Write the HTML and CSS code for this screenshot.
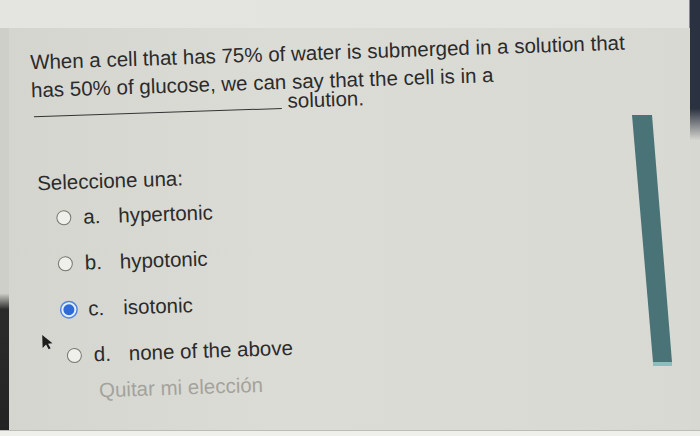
FILE: index.html
```html
<!DOCTYPE html>
<html>
<head>
<meta charset="utf-8">
<link rel="stylesheet" href="styles.css">
</head>
<body>
<div class="screen">
  <div class="topband"></div>
  <div class="panel">
    <div class="leftedge"></div>
    <div class="content">
      <div class="question">
        <p class="qline">When a cell that has 75% of water is submerged in a solution that</p>
        <p class="qline">has 50% of glucose, we can say that the cell is in a</p>
        <div class="blankline"><span class="blank"></span><span class="after">solution.</span></div>
      </div>
      <div class="prompt">Seleccione una:</div>
      <div class="options">
        <div class="opt opt-a"><span class="radio"></span><span class="letter">a.</span><span>hypertonic</span></div>
        <div class="opt opt-b"><span class="radio"></span><span class="letter">b.</span><span>hypotonic</span></div>
        <div class="opt opt-c"><span class="radio checked"></span><span class="letter">c.</span><span>isotonic</span></div>
        <div class="opt opt-d"><span class="cursor"><svg width="12" height="16" viewBox="0 0 12 16"><path d="M1 1 L1 14 L4.5 10.5 L7 15.5 L9 14.5 L6.5 9.8 L11 9.6 Z" fill="#1e1e1e"/></svg></span><span class="radio"></span><span class="letter">d.</span><span>none of the above</span></div>
      </div>
      <div class="clear">Quitar mi elección</div>
    </div>
    <div class="side">
      <svg width="64" height="256" viewBox="0 0 64 256"><polygon points="20,0 40,0 60,247 41,247" fill="#4a7377"/><polygon points="41,247 60,247 60,251 41,251" fill="#8fbcbc"/></svg>
    </div>
    <div class="rightedge"></div>
  </div>
  <div class="bottomband"></div>
</div>
</body>
</html>
```
FILE: styles.css
```css
html, body { margin: 0; padding: 0; }
body { width: 700px; height: 436px; overflow: hidden; background: #d7d7d1; font-family: "Liberation Sans", Arial, sans-serif; color: #2b2b2b; }
.screen { width: 700px; height: 436px; display: flex; flex-direction: column; background: #d8d8d2; }
.topband { height: 28px; background: linear-gradient(90deg, #e4e4e1 0%, #e2e2df 98.4%, #2a3140 98.6%); flex: none; }
.panel { flex: 1; display: flex; background: linear-gradient(90deg, #d5d5cf, #dcdcd6 40%, #d9d9d3); }
.leftedge { width: 9px; flex: none; background: linear-gradient(#cfcfc9 0%, #cfcfc9 66%, #2b2b2b 70%, #232323 100%); }
.content { flex: 1; min-width: 0; padding: 21px 0 0 20px; transform: rotate(-1.9deg); transform-origin: 0 0; font-size: 20.5px; }
.question { line-height: 28px; }
.qline { margin: 0; white-space: nowrap; }
.blankline { display: flex; align-items: flex-start; gap: 6px; margin-top: -9px; }
.blank { width: 248px; height: 22px; border-bottom: 1.5px solid #333; box-sizing: border-box; margin-left: 2px; }
.after { line-height: 28px; }
.prompt { line-height: 28px; margin: 46px 0 0 3px; }
.options { margin-top: -2px; }
.opt { display: flex; align-items: center; height: 46px; white-space: nowrap; }
.opt-a { padding-left: 21px; }
.opt-b { padding-left: 21px; }
.opt-c { padding-left: 23px; }
.opt-d { padding-left: 2px; }
.radio { width: 15px; height: 15px; border: 1.5px solid #77766f; border-radius: 50%; background: #efefeb; flex: none; margin-right: 12px; box-sizing: border-box; }
.radio.checked { border: 2.5px solid #e6eefa; background: #2f6bd6; box-shadow: 0 0 0 1.5px #4f86e0; }
.letter { width: 35px; }
.cursor { width: 25px; display: flex; align-items: flex-start; height: 30px; flex: none; margin-top: -14px; }
.clear { color: #a3a39c; line-height: 28px; margin: -1px 0 0 58px; }
.side { width: 78px; flex: none; padding-top: 87px; }
.rightedge { width: 10px; flex: none; background: linear-gradient(#2a3140 0%, #2a3140 20%, #d8d8d2 28%, #d8d8d2 100%); }
.bottomband { height: 5px; background: #efefec; border-top: 1px solid #bdbdb7; flex: none; }
```
